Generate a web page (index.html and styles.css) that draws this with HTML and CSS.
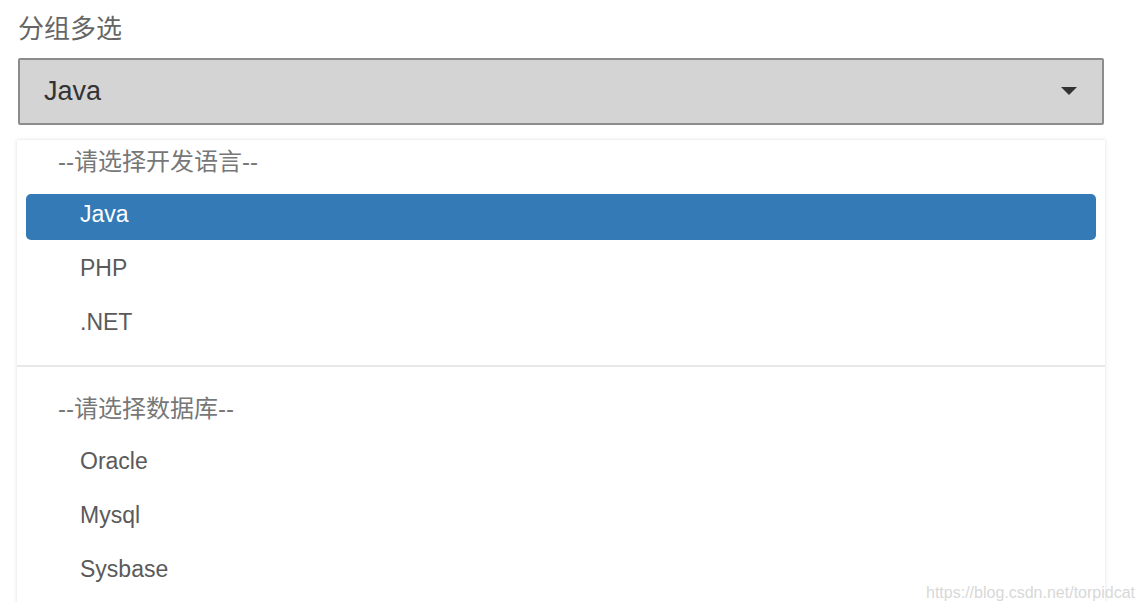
FILE: index.html
```html
<!DOCTYPE html>
<html lang="zh-CN">
<head>
<meta charset="utf-8">
<title>分组多选</title>
<link rel="stylesheet" href="styles.css">
</head>
<body>
<div class="page">
  <div class="label">分组多选</div>
  <div class="select">
    <span class="select-value">Java</span>
    <svg class="caret" width="16" height="8" viewBox="0 0 16 8"><path d="M0 0H16L8 8Z" fill="#333"/></svg>
  </div>
  <div class="menu">
    <div class="row header">--请选择开发语言--</div>
    <div class="row item active">Java</div>
    <div class="row item">PHP</div>
    <div class="row item">.NET</div>
    <div class="divider"></div>
    <div class="row header first">--请选择数据库--</div>
    <div class="row item">Oracle</div>
    <div class="row item">Mysql</div>
    <div class="row item">Sysbase</div>
  </div>
  <div class="watermark">https://blog.csdn.net/torpidcat</div>
</div>
</body>
</html>
```

FILE: styles.css
```css
html, body {
  margin: 0;
  padding: 0;
  background: #fff;
}

.page {
  position: relative;
  padding: 11px 0 0 18px;
  font-family: "Liberation Sans", "Noto Sans CJK SC", sans-serif;
}

.label {
  font-size: 26px;
  line-height: 36px;
  color: #666;
  margin-bottom: 11px;
}

.select {
  box-sizing: border-box;
  width: 1086px;
  height: 67px;
  background: #d4d4d4;
  border: 2px solid #8c8c8c;
  border-radius: 2px;
  display: flex;
  align-items: center;
  justify-content: space-between;
  padding: 0 25px 0 24px;
}

.select-value {
  font-size: 27px;
  color: #333;
}

.caret {
  display: block;
  margin-top: -1px;
}

.menu {
  box-sizing: border-box;
  width: 1088px;
  margin: 14px 0 0 -1px;
  padding: 0 9px 7px;
  background: #fff;
  border-top: 1px solid #f2f2f2;
  box-shadow: 0 1px 4px rgba(0, 0, 0, 0.13);
}

.row {
  height: 46px;
  display: flex;
  align-items: center;
  box-sizing: border-box;
  margin-top: 8px;
}

.row:first-child {
  margin-top: 0;
}

.row.first {
  margin-top: 20px;
}

.header {
  font-size: 24px;
  color: #777;
  padding: 0 0 8px 32px;
}

.item {
  font-size: 23px;
  color: #5a5a5a;
  padding: 0 0 6px 54px;
  border-radius: 5px;
}

.item.active {
  background: #337ab7;
  color: #fff;
}

.divider {
  height: 2px;
  background: #e8e8e8;
  margin: 17px -9px 0;
}

.watermark {
  position: absolute;
  left: 926px;
  top: 584px;
  font-size: 16px;
  color: #d8d8d8;
  text-shadow: 0 0 1px rgba(255, 255, 255, 0.8);
  white-space: nowrap;
}
```
